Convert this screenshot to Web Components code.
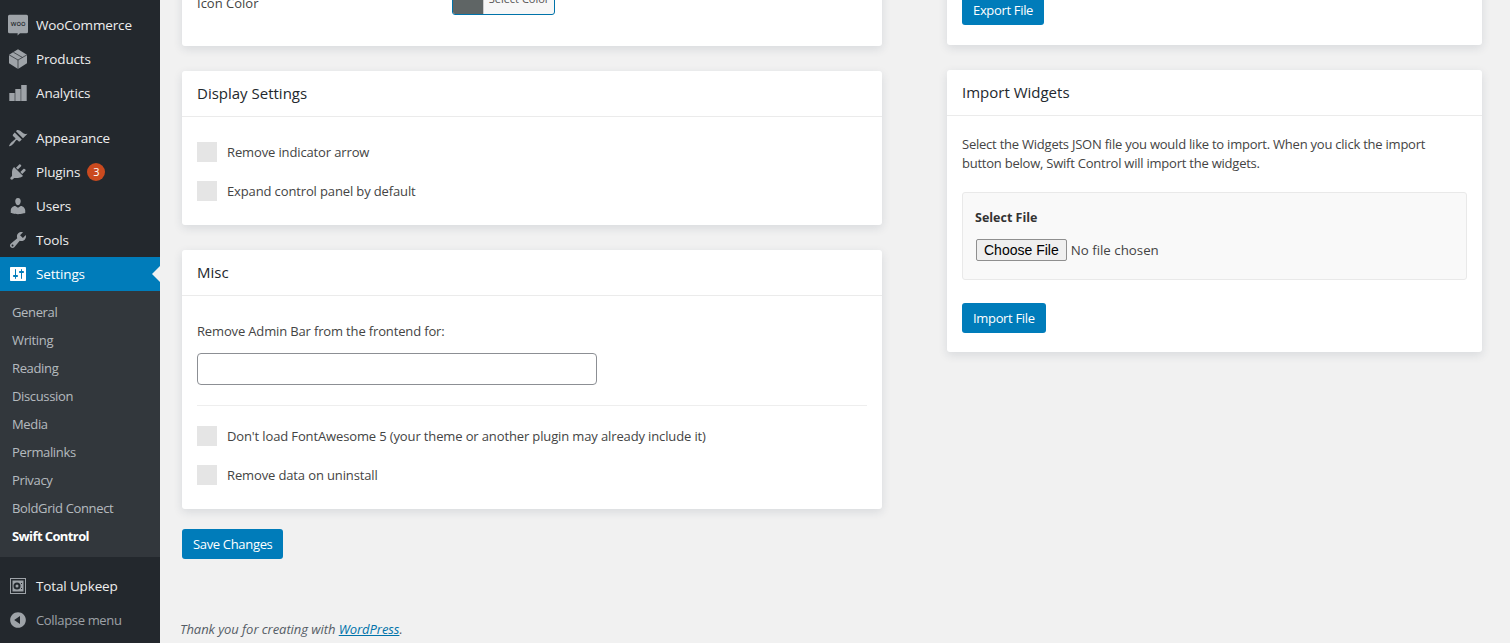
<!DOCTYPE html>
<html><head><meta charset="utf-8"><style>
html,body{margin:0;height:643px;overflow:hidden;background:#f1f1f1}
body{font:13px/19px "Open Sans",sans-serif;color:#444;display:flex}
a{color:#0073aa}
</style></head><body>
<wp-sidebar></wp-sidebar>
<sc-main></sc-main>
<script>
const I={
 woo:'<path d="M1.500 -1.200h17A1.500 1.500 0 0 1 20 .3v15.400a1.500 1.500 0 0 1-1.500 1.500H12L9.500 19.500 9.700 17.200H1.500A1.500 1.500 0 0 1 0 15.700V.3A1.500 1.500 0 0 1 1.500-1.200z" transform="translate(0 1)"/><text x="10" y="10.500" text-anchor="middle" font-family="DejaVu Sans" font-size="7.500" fill="#23282d">woo</text>',
 products:'<path d="M10 .3 19 5.800V14.300L10 20 1 14.300V5.800z"/><path d="M1 5.800 10 11 19 5.800M10 11V20M5.300 3.200 14.500 8.500" fill="none" stroke="#23282d" stroke-width=".7"/>',
 analytics:'<path d="M18.700 18V2h-5.500v16zm-6 0V6h-5.400v12zm-6 0v-8H1.300v8z"/>',
 appearance:'<path d="M8 3.200 15 10.200 19.500 5.800c-2 .4-3.300-.2-4.500-.9-1.500-.8-1.700-1.300-2.900-2.100-1.200-.8-3-.9-3.500-.3z"/><path d="M6.700 4.500 13.800 11.600 12 13.300c-.4.4-1 .4-1.400 0L9.500 12.200c-.4-.4-1-.4-1.400 0-.6.6-1.100 1.400-1.700 2.200-.3.4-.5.7-.8 1-1.300 1.400-3.900 3.300-4.400 2.800s1.400-3.100 2.800-4.400c.3-.3.6-.5 1-.8.8-.6 1.600-1.100 2.200-1.700.4-.4.4-1 0-1.400L5 8c-.4-.4-.4-1 0-1.400z"/>',
 plugins:'<path d="M13.110 4.360L9.870 7.600 8 5.730l3.240-3.240c.35-.34 1.050-.2 1.560.32.52.51.66 1.210.31 1.550zm-8 1.770l.91-1.120 9.010 9.010-1.190.84c-.71.71-2.630 1.160-3.820 1.160H6.140L4.900 17.260c-.59.59-1.540.59-2.120 0-.59-.58-.59-1.530 0-2.120l1.240-1.240v-3.880c0-1.130.4-3.190 1.090-3.890zm7.260 3.970l3.240-3.240c.34-.35 1.040-.21 1.550.31.52.51.66 1.210.31 1.550l-3.240 3.250z"/>',
 users:'<path d="M10 9.250c-2.270 0-2.730-3.440-2.730-3.440C7 4.020 7.820 2 9.970 2c2.160 0 2.980 2.020 2.710 3.810 0 0-.41 3.440-2.680 3.440zm0 2.570L12.720 10c2.390 0 4.520 2.330 4.520 4.530v2.490s-3.650 1.130-7.240 1.130c-3.650 0-7.240-1.130-7.240-1.130v-2.490c0-2.250 1.940-4.480 4.470-4.480z"/>',
 tools:'<path d="M16.680 9.770c-1.340 1.340-3.300 1.670-4.950.99l-5.410 6.520c-.99.99-2.590.99-3.580 0s-.99-2.590 0-3.570l6.520-5.420c-.68-1.650-.35-3.610.99-4.950 1.280-1.280 3.120-1.620 4.720-1.060l-2.890 2.890 2.820 2.820 2.860-2.870c.53 1.580.18 3.390-1.080 4.650zM3.810 16.210c.4.39 1.040.39 1.430 0 .4-.4.4-1.040 0-1.430-.39-.4-1.030-.4-1.430 0-.39.39-.39 1.030 0 1.430z"/>',
 settings:'<path d="M18 16V4c0-.55-.45-1-1-1H3c-.55 0-1 .45-1 1v12c0 .55.45 1 1 1h14c.55 0 1-.45 1-1zM8 11h1c.55 0 1 .45 1 1s-.45 1-1 1H8v1.500c0 .28-.22.5-.5.5s-.5-.22-.5-.5V13H6c-.55 0-1-.45-1-1s.45-1 1-1h1V5.500c0-.28.22-.5.5-.5s.5.22.5.5V11zm5-2h-1c-.55 0-1-.45-1-1s.45-1 1-1h1V5.500c0-.28.22-.5.5-.5s.5.22.5.5V7h1c.55 0 1 .45 1 1s-.45 1-1 1h-1v5.500c0 .28-.22.5-.5.5s-.5-.22-.5-.5V9z"/>',
 upkeep:'<path fill-rule="evenodd" d="M2 2h16v16H2zM3 3v14h14V3zM4.500 4.500h11v11h-11zM9 6.500a3.500 3.500 0 1 0 0 7 3.500 3.500 0 0 0 0-7zM9 8.500a1.500 1.500 0 1 1 0 3 1.500 1.500 0 0 1 0-3zM14 7h-1v1h1zM14 12h-1v1h1z"/>',
 collapse:'<path d="M10 2.160c4.330 0 7.840 3.510 7.840 7.840s-3.510 7.840-7.840 7.840S2.160 14.330 2.160 10 5.710 2.160 10 2.160zm2 11.720V6.120L6.180 9.970z"/>'
};
class Base extends HTMLElement{
 render(html){(this.shadowRoot||this.attachShadow({mode:'open'})).innerHTML=html}
}
customElements.define('wp-menu-item',class extends Base{connectedCallback(){
 const a=this.hasAttribute('active'),c=this.hasAttribute('dim');
 this.render(`<style>
 :host{display:flex;align-items:center;height:34px;position:relative;background:${a?'#007cba':'transparent'};color:${a?'#fff':c?'rgba(240,245,250,.6)':'#eee'};font-size:${c?13:13.5}px;letter-spacing:${c?-.33:-.15}px;line-height:18px}
 svg{width:20px;height:20px;margin-left:8px;margin-right:8px;fill:${a?'#fff':'rgba(240,245,250,.6)'};flex:none;overflow:visible}
 .arrow{position:absolute;right:0;top:50%;margin-top:-8px;border:8px solid transparent;border-right-color:#f1f1f1;border-left:0}
 </style><svg viewBox="0 0 20 20">${I[this.getAttribute('icon')]}</svg><slot></slot>${a?'<span class="arrow"></span>':''}`);
}});
customElements.define('wp-badge',class extends Base{connectedCallback(){
 this.render(`<style>:host{display:inline-flex;align-items:center;justify-content:center;width:18px;height:18px;border-radius:50%;background:#ca4a1f;color:#fff;font-size:11px;line-height:18px;margin-left:7px}</style><slot></slot>`);
}});
customElements.define('wp-sub-item',class extends Base{connectedCallback(){
 const a=this.hasAttribute('current');
 this.render(`<style>:host{display:flex;align-items:center;height:28px;padding-left:12px;font-size:13px;letter-spacing:${a?-.6:-.35}px;color:${a?'#fff':'rgba(240,245,250,.7)'};font-weight:${a?700:400}}</style><slot></slot>`);
}});
customElements.define('wp-sidebar',class extends Base{connectedCallback(){
 this.render(`<style>
 :host{display:flex;flex-direction:column;width:160px;height:643px;flex:none;background:#23282d;box-sizing:border-box;padding-top:8px}
 .gap{height:11px}.sub{background:#32373c;padding:7px 0;}.sub2{height:11px}
 </style>
 <wp-menu-item icon="woo">WooCommerce</wp-menu-item>
 <wp-menu-item icon="products">Products</wp-menu-item>
 <wp-menu-item icon="analytics">Analytics</wp-menu-item>
 <div class="gap"></div>
 <wp-menu-item icon="appearance">Appearance</wp-menu-item>
 <wp-menu-item icon="plugins">Plugins<wp-badge>3</wp-badge></wp-menu-item>
 <wp-menu-item icon="users">Users</wp-menu-item>
 <wp-menu-item icon="tools">Tools</wp-menu-item>
 <wp-menu-item icon="settings" active>Settings</wp-menu-item>
 <div class="sub">
 <wp-sub-item>General</wp-sub-item><wp-sub-item>Writing</wp-sub-item><wp-sub-item>Reading</wp-sub-item><wp-sub-item>Discussion</wp-sub-item><wp-sub-item>Media</wp-sub-item><wp-sub-item>Permalinks</wp-sub-item><wp-sub-item>Privacy</wp-sub-item><wp-sub-item>BoldGrid Connect</wp-sub-item><wp-sub-item current>Swift Control</wp-sub-item>
 </div>
 <div class="sub2"></div>
 <wp-menu-item icon="upkeep" style="margin-top:1px">Total Upkeep</wp-menu-item>
 <wp-menu-item icon="collapse" dim>Collapse menu</wp-menu-item>`);
}});
customElements.define('sc-card',class extends Base{connectedCallback(){
 const t=this.getAttribute('heading');
 this.render(`<style>
 :host{display:block;background:#fff;border-radius:3px;box-shadow:0 3px 10px rgba(30,50,70,.12)}
 h2{margin:0;height:46px;box-sizing:border-box;border-bottom:1px solid #ebebeb;padding:0 15px 1px;display:flex;align-items:center;font:400 15px/20px "Open Sans",sans-serif;color:#23282d}
 .b{padding:15px}
 </style>${t?`<h2>${t}</h2>`:''}<div class="b"><slot></slot></div>`);
}});
customElements.define('sc-check',class extends Base{connectedCallback(){
 this.render(`<style>
 :host{display:flex;align-items:center;height:20px;gap:10px;margin-top:19px;font-size:13px;letter-spacing:-.13px;color:#444}
 :host([first]){margin-top:0}
 i{width:20px;height:20px;background:#e5e5e5;flex:none}
 </style><i></i><slot></slot>`);
}});
customElements.define('sc-button',class extends Base{connectedCallback(){
 this.render(`<style>:host{display:inline-flex;align-items:center;height:30px;padding:0 11px;background:#007cba;color:#fff;border-radius:3px;font-size:13px;letter-spacing:-.33px;box-sizing:border-box}</style><slot></slot>`);
}});
customElements.define('sc-color',class extends Base{connectedCallback(){
 this.render(`<style>
 :host{display:flex;width:103px;height:30px;box-sizing:border-box;border:1px solid #0073aa;border-radius:3px;overflow:hidden;font-size:11px;color:#555;background:#f7f7f7}
 i{width:30px;background:#5f6565;flex:none}
 span{flex:1;text-align:center;line-height:26px;border-left:1px solid #ccc}
 </style><i></i><span><slot></slot></span>`);
}});
customElements.define('sc-file',class extends Base{connectedCallback(){
 this.render(`<style>
 :host{display:flex;align-items:center;gap:4px;margin:12px 0 0 1px;height:22px;font-size:13.300px;color:#444}
 b{font:400 14px/18px "Liberation Sans",sans-serif;color:#000;height:22px;box-sizing:border-box;border:1px solid #8f8f8f;border-radius:2px;background:#efefef;padding:0 7px;display:flex;align-items:center}
 </style><b>Choose File</b><slot></slot>`);
}});
customElements.define('sc-main',class extends Base{connectedCallback(){
 this.render(`<style>
 :host{display:flex;flex-direction:column;flex:1;padding-left:22px;min-width:0}
 .cols{display:grid;grid-template-columns:700px 535px;column-gap:65px;align-items:start}
 .l,.r{display:flex;flex-direction:column;gap:25px}
 .top{margin-top:-60px}
 .icon-row{height:60px;display:flex;align-items:flex-end;padding-bottom:16px}
 .icon-row span{width:255px;margin-bottom:2px}
 label{display:block;letter-spacing:-.15px}
 .disp{padding:10px 0 9px}
 .input{width:400px;height:32px;box-sizing:border-box;border:1px solid #8c8f94;border-radius:4px;background:#fff;margin:12px 0 20px;display:block}
 hr{border:0;border-top:1px solid #eee;margin:0 0 20px}
 .misc{padding:11px 0 9px}
 .save{align-self:flex-start;margin-top:-5px}
 p{margin:0 0 19px;letter-spacing:-.23px}
 .box{background:#f9f9f9;border:1px solid #e9e9e9;border-radius:3px;padding:15px 12px 18px;margin-bottom:23px}
 .box strong{display:block;color:#333;font-weight:700;font-size:12.500px}
 .imp{padding-top:4px;padding-bottom:4px}
 footer{margin:61px 0 0 -2px;font-style:italic;font-size:13px;letter-spacing:-.06px;color:#555d66}
 footer a{color:#0073aa}
 .exp{height:70px;padding-bottom:5px;display:flex;align-items:flex-end}
 </style>
 <div class="cols">
  <div class="l">
   <sc-card class="top"><div class="icon-row"><span>Icon Color</span><sc-color>Select Color</sc-color></div></sc-card>
   <sc-card heading="Display Settings"><div class="disp"><sc-check first>Remove indicator arrow</sc-check><sc-check>Expand control panel by default</sc-check></div></sc-card>
   <sc-card heading="Misc"><div class="misc"><label>Remove Admin Bar from the frontend for:</label><span class="input"></span><hr><sc-check first>Don't load FontAwesome 5 (your theme or another plugin may already include it)</sc-check><sc-check>Remove data on uninstall</sc-check></div></sc-card>
   <sc-button class="save">Save Changes</sc-button>
  </div>
  <div class="r">
   <sc-card class="top"><div class="exp"><sc-button>Export File</sc-button></div></sc-card>
   <sc-card heading="Import Widgets"><div class="imp"><p>Select the Widgets JSON file you would like to import. When you click the import button below, Swift Control will import the widgets.</p><div class="box"><strong>Select File</strong><sc-file>No file chosen</sc-file></div><sc-button>Import File</sc-button></div></sc-card>
  </div>
 </div>
 <footer>Thank you for creating with <a href="#">WordPress</a>.</footer>`);
}});
</script>
</body></html>
